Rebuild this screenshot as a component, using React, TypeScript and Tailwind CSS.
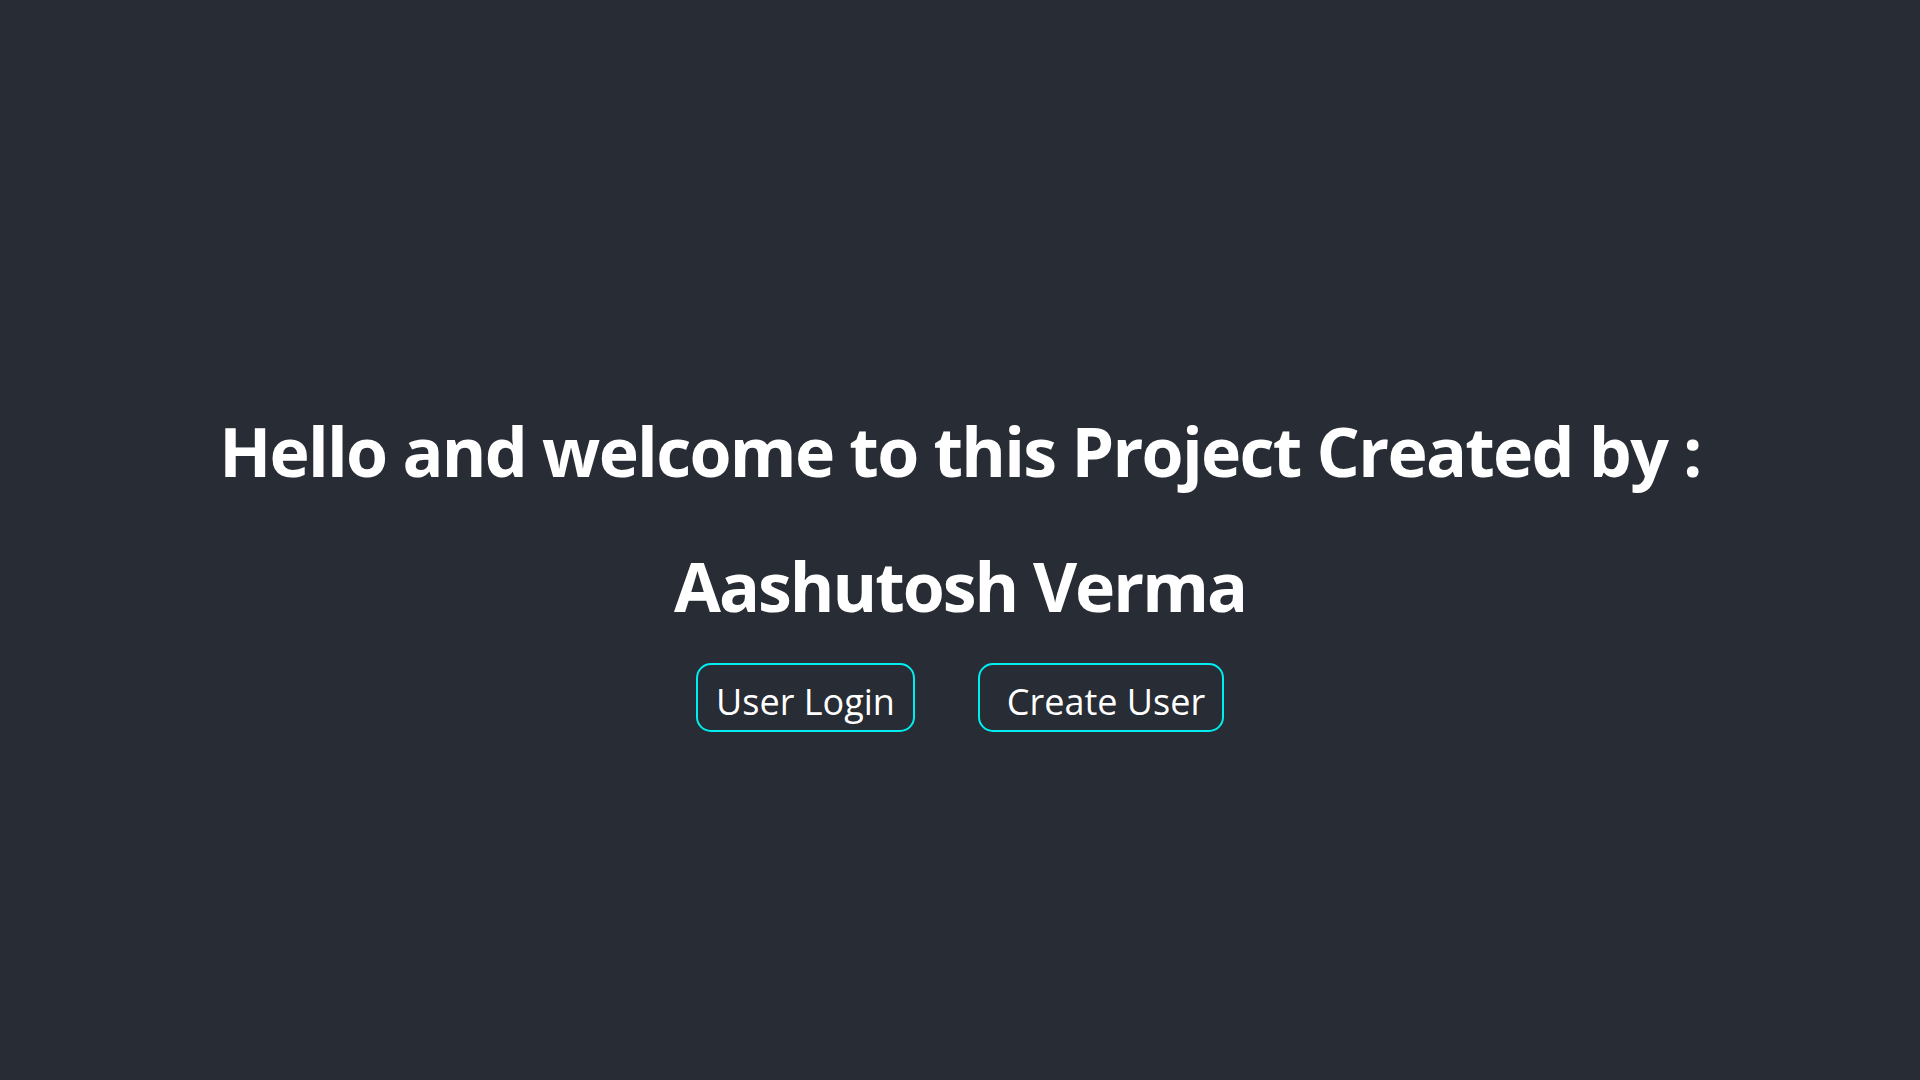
const App = () => {
  return (
    <div
      className="min-h-screen bg-[#282c34] pt-[62px] text-white flex flex-col items-center justify-center"
      style={{ fontFamily: '"Open Sans", "Noto Sans", sans-serif' }}
    >
      {/* Heading */}
      <h1 className="text-[68px] font-bold leading-[1.2] tracking-[-1.7px]">
        Hello and welcome to this Project Created by :
      </h1>
      <h2 className="mt-[53px] text-[68px] font-bold leading-[1.2] tracking-[-2px]">
        Aashutosh Verma
      </h2>

      {/* Actions */}
      <div className="mt-[37px] flex items-start gap-[63px]">
        <button className="h-[69px] w-[219px] rounded-[15px] border-2 border-[#00eef0] pt-[8px] text-[36px] text-white">
          User Login
        </button>
        <button className="h-[69px] w-[246px] rounded-[15px] border-2 border-[#00eef0] pl-[10px] pt-[8px] text-[36px] text-white">
          Create User
        </button>
      </div>
    </div>
  );
};

export default App;
